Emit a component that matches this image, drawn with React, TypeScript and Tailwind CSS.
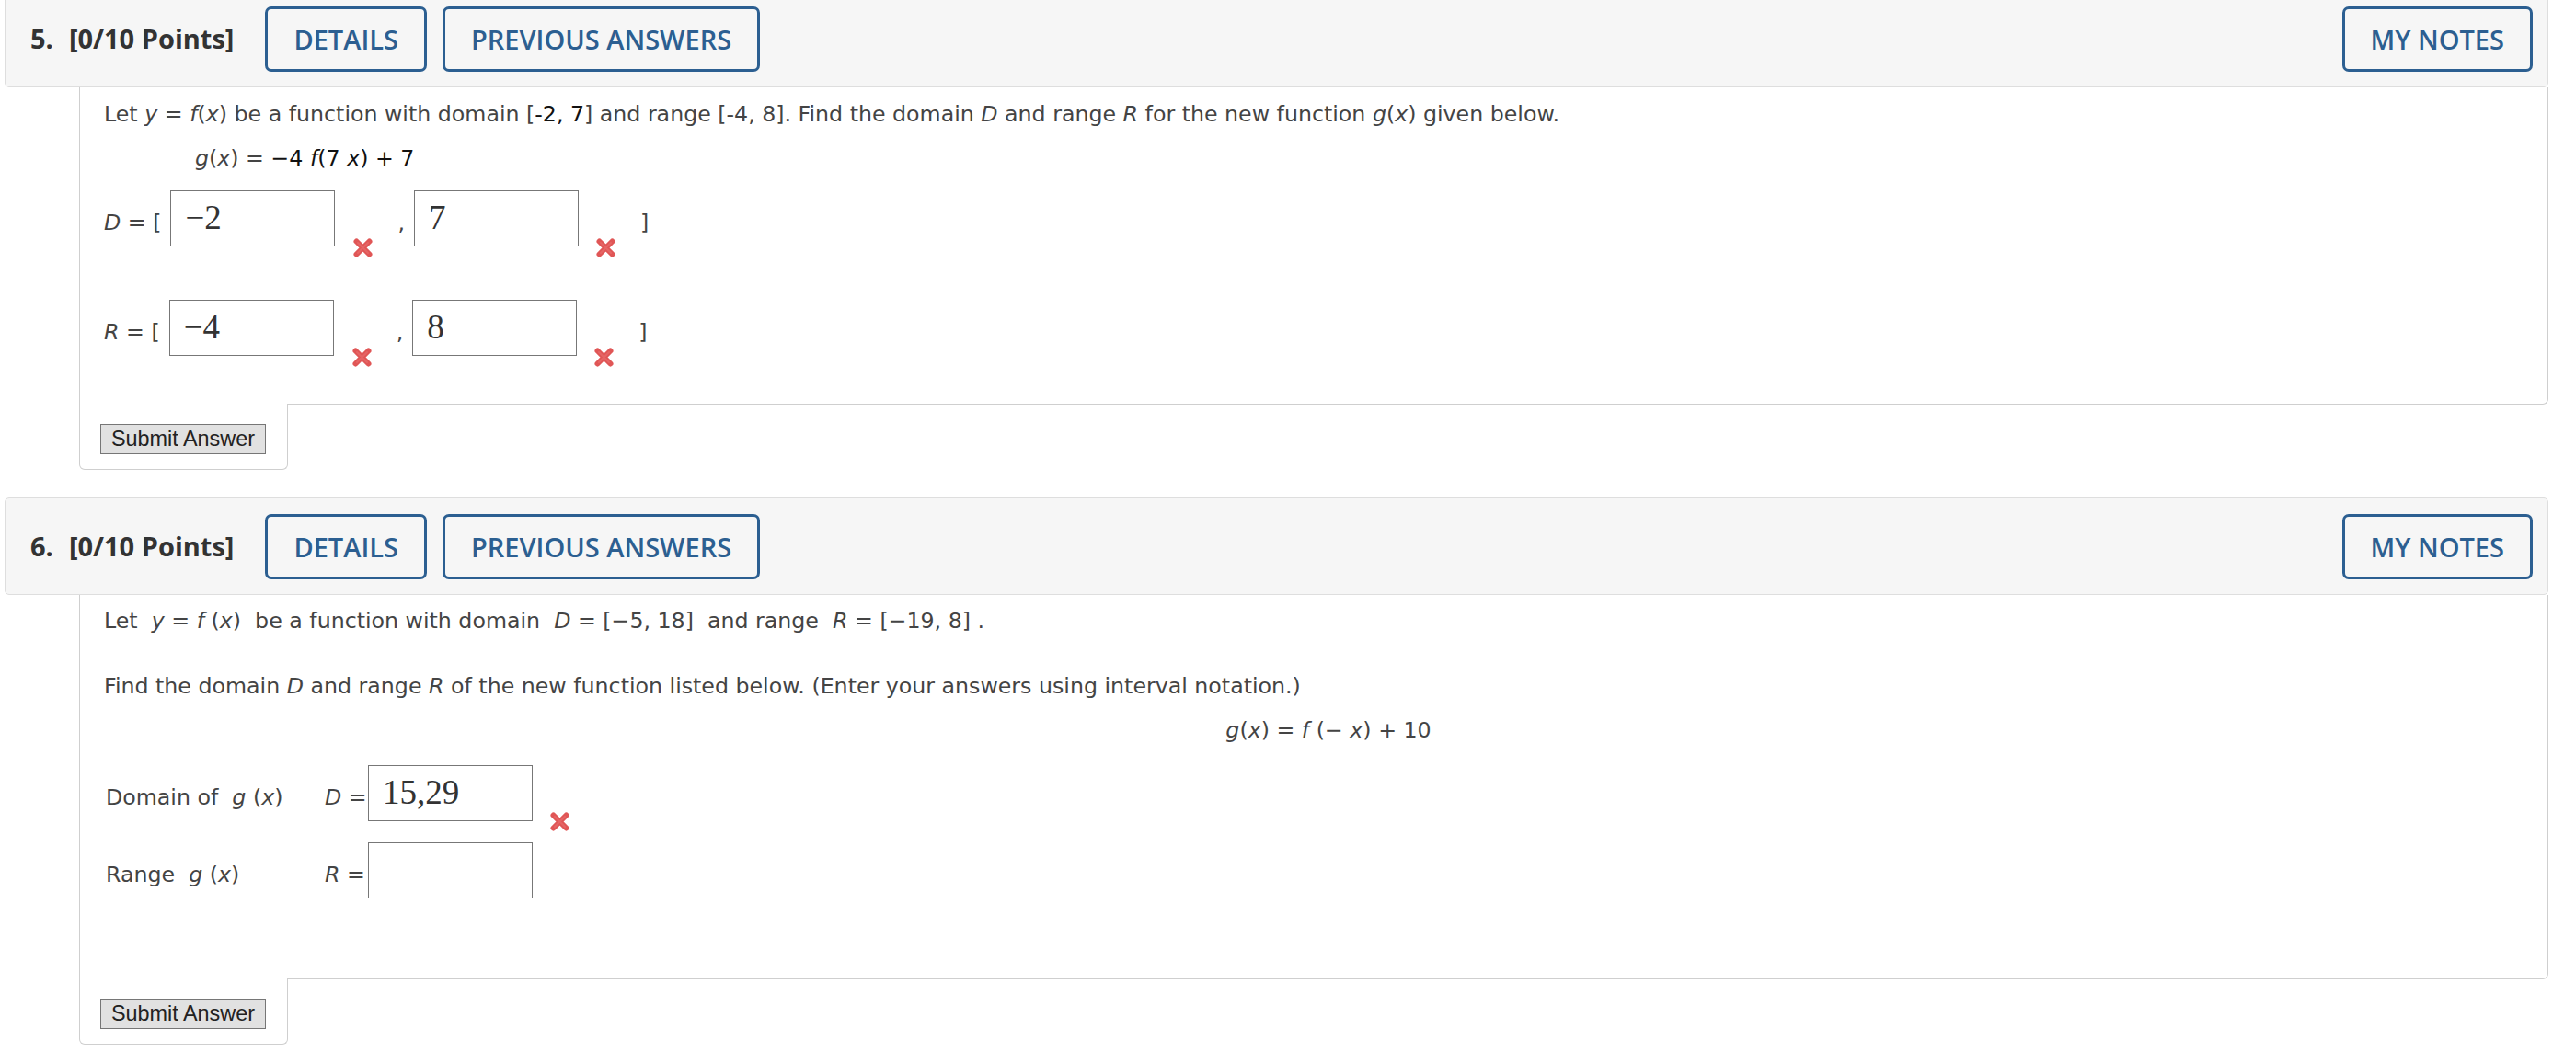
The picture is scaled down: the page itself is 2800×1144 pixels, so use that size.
import React from "react";

const hdrBtn =
  "h-[71px] px-[28px] border-[3px] border-[#2c5f91] rounded-[7px] text-[#2c5f91] font-semibold text-[29px] leading-none flex items-center font-['Open_Sans',sans-serif] bg-transparent";

function XMark({ className = "" }: { className?: string }) {
  return (
    <svg width="23" height="23" viewBox="0 0 23 23" className={className}>
      <path d="M4.5 4.5 L18.5 18.5 M18.5 4.5 L4.5 18.5" stroke="#e05656" strokeWidth="6" strokeLinecap="round" />
      <path d="M6 6 L17 17 M17 6 L6 17" stroke="#ea7070" strokeWidth="2" strokeLinecap="round" opacity="0.6" />
    </svg>
  );
}

function Header({ num }: { num: string }) {
  return (
    <div className="h-[106px] bg-[#f6f6f6] border border-[#dedede] rounded-[5px] flex items-center pl-[27px] pr-[16px]">
      <div className="font-bold text-[29px] text-[#333] font-['Open_Sans',sans-serif] whitespace-nowrap">
        <span>{num}.</span>
        <span className="ml-[17px]">[0/10 Points]</span>
      </div>
      <button className={hdrBtn + " ml-[34px]"}>DETAILS</button>
      <button className={hdrBtn + " ml-[17px]"}>PREVIOUS ANSWERS</button>
      <button className={hdrBtn + " ml-auto"}>MY NOTES</button>
    </div>
  );
}

function Input({ value, className = "" }: { value?: string; className?: string }) {
  return (
    <div
      className={
        "w-[179px] h-[61px] shrink-0 border border-[#777] bg-white pl-[15px] pt-[10px] text-[37px] leading-[37px] text-[#333] font-['Liberation_Serif',serif] " +
        className
      }
    >
      {value}
    </div>
  );
}

function SubmitTab() {
  return (
    <div className="ml-[81px] -mt-px relative w-[227px] h-[72px] border-x border-b border-[#cfcfcf] rounded-b-[6px] bg-white pt-[22px] pl-[22px]">
      <button className="h-[33px] px-[11px] border border-[#767676] bg-[#e1e1e1] text-[23.4px] leading-none text-[#222] font-['Liberation_Sans',Arial,sans-serif] whitespace-nowrap">
        Submit Answer
      </button>
    </div>
  );
}

const bodyCls =
  "ml-[81px] border-x border-b border-[#cfcfcf] rounded-br-[6px] pl-[26px] pr-[26px] text-[23.7px] leading-[28px] text-[#444] font-['DejaVu_Sans',Verdana,sans-serif]";

export default function App() {
  return (
    <div className="min-h-screen bg-white pl-[5px] pr-[30px] -mt-[11px]">
      {/* Question 5 */}
      <Header num="5" />
      <div className={bodyCls + " pt-[15px] pb-[52px]"}>
        <div className="whitespace-nowrap">
          Let <i>y</i> = <i>f</i>(<i>x</i>) be a function with domain [<span className="text-[#111]">-2, 7</span>] and range [-4, 8]. Find the domain <i>D</i> and range <i>R</i> for the new function <i>g</i>(<i>x</i>) given below.
        </div>
        <div className="mt-[20px] ml-[99px] whitespace-nowrap">
          <i>g</i>(<i>x</i>) = <span className="text-[#111]">−4 <i>f</i>(7 <i>x</i>) + 7</span>
        </div>
        <div className="mt-[21px] h-[61px] flex items-start">
          <span className="mt-[21px] whitespace-pre">
            <i>D</i> = [
          </span>
          <Input value="−2" className="ml-[10px]" />
          <XMark className="ml-[19px] mt-[51px] shrink-0" />
          <span className="ml-[26px] mt-[21px]">,</span>
          <Input value="7" className="ml-[10px]" />
          <XMark className="ml-[18px] mt-[51px] shrink-0" />
          <span className="ml-[26px] mt-[21px]">]</span>
        </div>
        <div className="mt-[58px] h-[61px] flex items-start">
          <span className="mt-[21px] whitespace-pre">
            <i>R</i> = [
          </span>
          <Input value="−4" className="ml-[10px]" />
          <XMark className="ml-[19px] mt-[51px] shrink-0" />
          <span className="ml-[26px] mt-[21px]">,</span>
          <Input value="8" className="ml-[10px]" />
          <XMark className="ml-[18px] mt-[51px] shrink-0" />
          <span className="ml-[26px] mt-[21px]">]</span>
        </div>
      </div>
      <SubmitTab />

      {/* Question 6 */}
      <div className="mt-[30px]">
        <Header num="6" />
      </div>
      <div className={bodyCls + " pt-[14px] pb-[87px]"}>
        <div className="whitespace-pre">
          Let  <i>y</i> = <i>f</i> (<i>x</i>)  be a function with domain  <i>D</i> = [−5, 18]  and range  <i>R</i> = [−19, 8] .
        </div>
        <div className="mt-[43px] whitespace-pre">
          Find the domain <i>D</i> and range <i>R</i> of the new function listed below. (Enter your answers using interval notation.)
        </div>
        <div className="mt-[20px] pl-[32px] text-center whitespace-pre">
          <i>g</i>(<i>x</i>) = <i>f</i> (− <i>x</i>) + 10
        </div>
        <div className="mt-[24px] h-[61px] flex items-start">
          <span className="w-[240px] pl-[2px] mt-[21px] whitespace-pre shrink-0">
            Domain of  <i>g</i> (<i>x</i>)
          </span>
          <span className="w-[47px] mt-[21px] whitespace-pre shrink-0">
            <i>D</i> =
          </span>
          <Input value="15,29" />
          <XMark className="ml-[18px] mt-[50px] shrink-0" />
        </div>
        <div className="mt-[23px] h-[61px] flex items-start">
          <span className="w-[240px] pl-[2px] mt-[21px] whitespace-pre shrink-0">
            Range  <i>g</i> (<i>x</i>)
          </span>
          <span className="w-[47px] mt-[21px] whitespace-pre shrink-0">
            <i>R</i> =
          </span>
          <Input />
        </div>
      </div>
      <SubmitTab />
    </div>
  );
}
